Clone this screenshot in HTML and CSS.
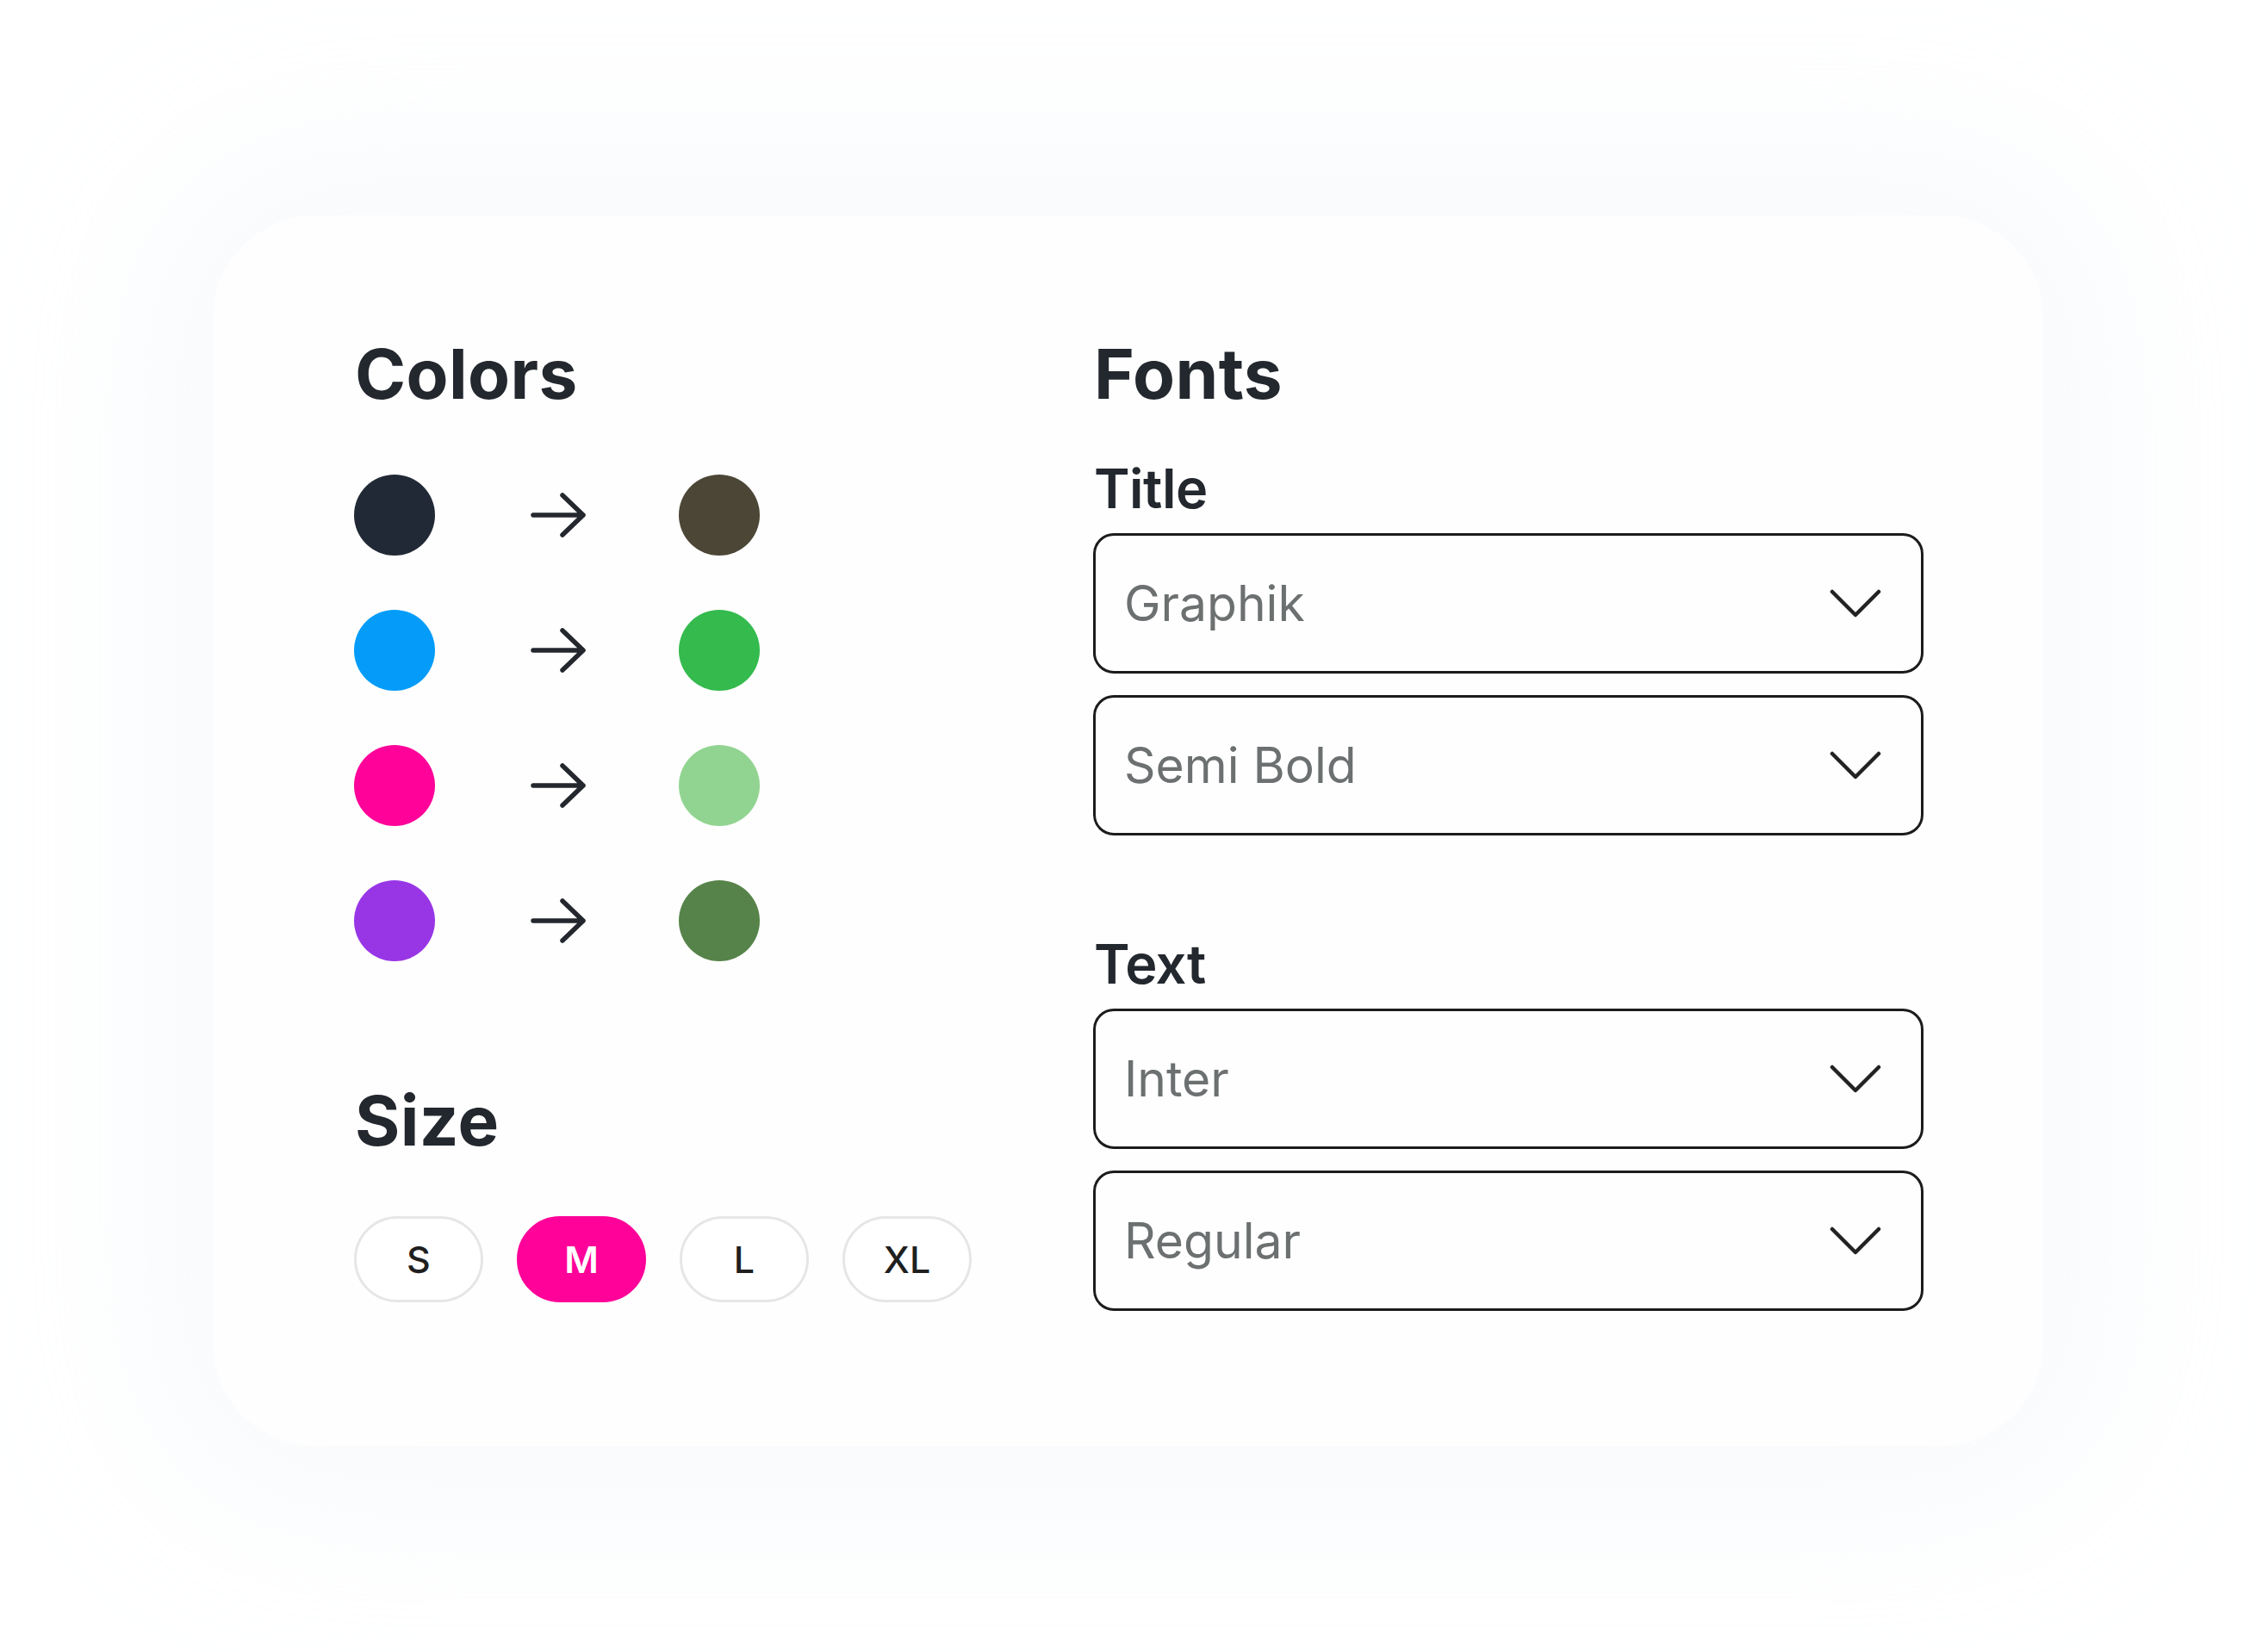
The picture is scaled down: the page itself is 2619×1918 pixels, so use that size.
FILE: index.html
```html
<!DOCTYPE html>
<html lang="en">
<head>
  <meta charset="UTF-8">
  <title>Theme Settings</title>
  <link rel="stylesheet" href="styles.css">
</head>
<body>

  <div class="card">
    <div class="col">
      <h2>Colors</h2>

      <div class="swaps">
        <div class="swap">
          <span class="dot dot-navy"></span>
          <svg class="arrow" viewBox="0 0 66 54"><path d="M4 27 H62 M38 4 L62 27 L38 50"/></svg>
          <span class="dot dot-olive"></span>
        </div>
        <div class="swap">
          <span class="dot dot-blue"></span>
          <svg class="arrow" viewBox="0 0 66 54"><path d="M4 27 H62 M38 4 L62 27 L38 50"/></svg>
          <span class="dot dot-green"></span>
        </div>
        <div class="swap">
          <span class="dot dot-pink"></span>
          <svg class="arrow" viewBox="0 0 66 54"><path d="M4 27 H62 M38 4 L62 27 L38 50"/></svg>
          <span class="dot dot-mint"></span>
        </div>
        <div class="swap">
          <span class="dot dot-purple"></span>
          <svg class="arrow" viewBox="0 0 66 54"><path d="M4 27 H62 M38 4 L62 27 L38 50"/></svg>
          <span class="dot dot-moss"></span>
        </div>
      </div>

      <h2 class="size-title">Size</h2>
      <div class="sizes">
        <span class="pill">S</span>
        <span class="pill active">M</span>
        <span class="pill">L</span>
        <span class="pill">XL</span>
      </div>
    </div>

    <div class="col">
      <h2>Fonts</h2>

      <h3>Title</h3>
      <div class="select">
        <span>Graphik</span>
        <svg class="chevron" viewBox="0 0 60 34"><path d="M3 3 L30 30 L57 3"/></svg>
      </div>
      <div class="select">
        <span>Semi Bold</span>
        <svg class="chevron" viewBox="0 0 60 34"><path d="M3 3 L30 30 L57 3"/></svg>
      </div>

      <h3 class="text-label">Text</h3>
      <div class="select">
        <span>Inter</span>
        <svg class="chevron" viewBox="0 0 60 34"><path d="M3 3 L30 30 L57 3"/></svg>
      </div>
      <div class="select">
        <span>Regular</span>
        <svg class="chevron" viewBox="0 0 60 34"><path d="M3 3 L30 30 L57 3"/></svg>
      </div>
    </div>
  </div>

</body>
</html>
```

FILE: styles.css
```css
body { margin: 0; padding: 250px 0 0; background: #fff; font-family: Inter, "Noto Sans", sans-serif; color: #23272e; height: 1668px; overflow: hidden; }
.card { width: 2125px; height: 1429px; box-sizing: border-box; margin: 0 auto; padding: 136px 139px 0 165px; background: #fefefe; border-radius: 120px; box-shadow: 0 0 200px 50px rgba(242, 246, 251, 0.7); display: grid; grid-template-columns: 858px 1fr; }

h2 { margin: 0; font-size: 80px; line-height: 96px; font-weight: 700; letter-spacing: 0.4px; }
h3 { margin: 47px 0 14px; font-size: 63px; line-height: 76px; font-weight: 600; letter-spacing: -0.5px; }
.text-label { margin-top: 111px; }

.swaps { display: flex; flex-direction: column; gap: 63px; margin-top: 69px; }
.swap { display: flex; align-items: center; }
.dot { width: 94px; height: 94px; border-radius: 50%; margin-left: -1px; }
.arrow { width: 66px; height: 54px; margin: 0 108px 0 110px; fill: none; stroke: #24282e; stroke-width: 5.5; stroke-linecap: round; stroke-linejoin: round; }
.dot-navy { background: #222936; }
.dot-olive { background: #4b4636; }
.dot-blue { background: #049cf8; }
.dot-green { background: #34ba4d; }
.dot-pink { background: #fe0299; }
.dot-mint { background: #91d491; }
.dot-purple { background: #9836e6; }
.dot-moss { background: #568349; }

.size-title { margin-top: 137px; }
.sizes { display: flex; gap: 39px; margin-top: 63px; margin-left: -1px; }
.pill { width: 150px; height: 100px; box-sizing: border-box; border: 3px solid #e6e6e6; border-radius: 50px; display: flex; align-items: center; justify-content: center; font-size: 43px; font-weight: 500; color: #1f1f1f; background: #fff; }
.pill.active { background: #fe0299; border-color: #fe0299; color: #fff; font-weight: 600; }

.select { height: 163px; box-sizing: border-box; border: 3px solid #1c1c1c; border-radius: 24px; margin-bottom: 25px; margin-left: -1px; padding: 0 46px 0 33px; display: flex; align-items: center; justify-content: space-between; font-size: 57px; color: #6c7070; }
.chevron { width: 60px; height: 34px; fill: none; stroke: #222; stroke-width: 4.5; stroke-linecap: round; stroke-linejoin: round; }
```
